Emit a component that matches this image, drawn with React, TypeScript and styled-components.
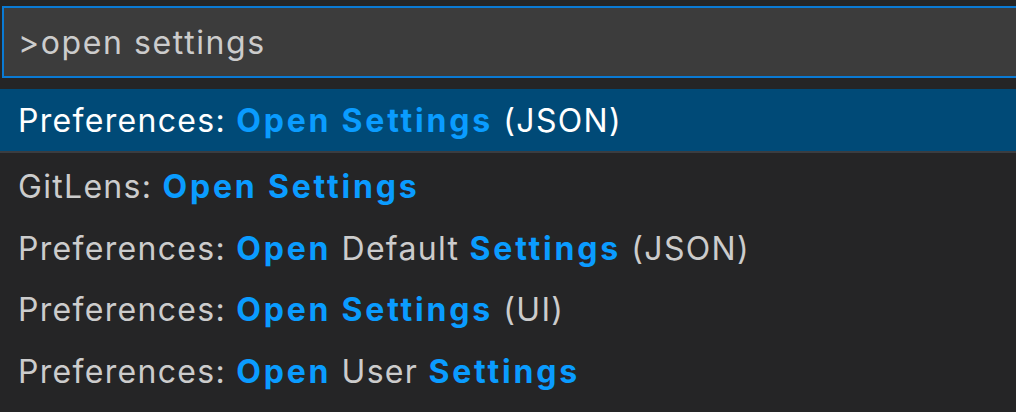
import React from "react";
import styled, { createGlobalStyle } from "styled-components";

const GlobalStyle = createGlobalStyle`
  html, body {
    margin: 0;
    padding: 0;
    background: #252526;
  }
  body {
    font-family: Inter, "Noto Sans", sans-serif;
  }
`;

type Part = { text: string; hit?: boolean };

const items: Part[][] = [
  [
    { text: "Preferences: " },
    { text: "Open Settings", hit: true },
    { text: " (JSON)" },
  ],
  [{ text: "GitLens: " }, { text: "Open Settings", hit: true }],
  [
    { text: "Preferences: " },
    { text: "Open", hit: true },
    { text: " Default " },
    { text: "Settings", hit: true },
    { text: " (JSON)" },
  ],
  [
    { text: "Preferences: " },
    { text: "Open Settings", hit: true },
    { text: " (UI)" },
  ],
  [
    { text: "Preferences: " },
    { text: "Open", hit: true },
    { text: " User " },
    { text: "Settings", hit: true },
  ],
];

const Label = ({ parts }: { parts: Part[] }) => (
  <>
    {parts.map((p, j) =>
      p.hit ? <Hit key={j}>{p.text}</Hit> : <span key={j}>{p.text}</span>
    )}
  </>
);

export default function App() {
  const [first, ...rest] = items;
  return (
    <>
      <GlobalStyle />
      <Palette>
        <InputWrap>
          <SearchInput>&gt;open settings</SearchInput>
        </InputWrap>
        <List>
          <Row selected={1}>
            <Label parts={first} />
          </Row>
          <Others>
            {rest.map((parts, i) => (
              <Row key={i} selected={0}>
                <Label parts={parts} />
              </Row>
            ))}
          </Others>
        </List>
      </Palette>
    </>
  );
}

const Palette = styled.div`
  width: 1016px;
  height: 412px;
  overflow: hidden;
  background: #252526;
`;

const InputWrap = styled.div`
  padding: 6px 0 0 2px;
`;

const SearchInput = styled.div`
  box-sizing: border-box;
  height: 72px;
  width: 1030px;
  background: #3c3c3c;
  border: 2px solid #0a7ad4;
  padding-left: 14px;
  display: flex;
  align-items: center;
  color: #cccccc;
  font-size: 32px;
  letter-spacing: 1.6px;
  white-space: pre;
`;

const List = styled.div`
  margin-top: 11px;
  display: flex;
  flex-direction: column;
`;

const Others = styled.div`
  padding-top: 3px;
  display: flex;
  flex-direction: column;
`;

interface RowProps {
  selected: number;
}
const Row = styled.div<RowProps>`
  box-sizing: border-box;
  height: ${(p) => (p.selected ? "64px" : "61.5px")};
  display: flex;
  align-items: center;
  padding-left: 18px;
  font-size: 32px;
  letter-spacing: 1.3px;
  white-space: pre;
  color: ${(p) => (p.selected ? "#ffffff" : "#cccccc")};
  background: ${(p) => (p.selected ? "#004a77" : "transparent")};
  border-bottom: ${(p) => (p.selected ? "2px solid #3a3d41" : "none")};
`;

const Hit = styled.span`
  color: #0a9cff;
  font-weight: 700;
  letter-spacing: 2.8px;
`;
